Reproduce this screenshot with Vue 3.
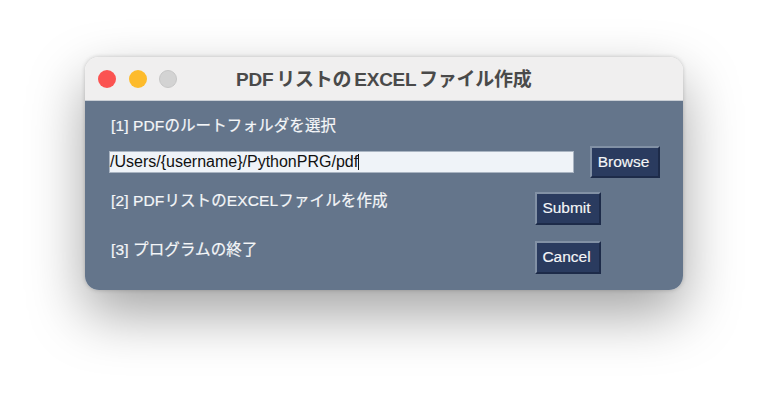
<template>
  <div class="page">
    <div class="window">
      <div class="titlebar">
        <div class="lights">
          <span class="light red"></span>
          <span class="light yellow"></span>
          <span class="light grey"></span>
        </div>
        <div class="title">PDF リストの EXCEL ファイル作成</div>
      </div>
      <div class="content">
        <div class="label first">[1] PDFのルートフォルダを選択</div>
        <div class="path-row">
          <div class="path-input">
            <span>{{ path }}</span><i class="caret"></i>
          </div>
          <button class="btn browse">Browse</button>
        </div>
        <div v-for="row in actions" :key="row.button" class="action-row">
          <div class="label">{{ row.text }}</div>
          <button class="btn action">{{ row.button }}</button>
        </div>
      </div>
    </div>
  </div>
</template>

<script setup>
const path = '/Users/{username}/PythonPRG/pdf';

const actions = [
  { text: '[2] PDFリストのEXCELファイルを作成', button: 'Submit' },
  { text: '[3] プログラムの終了', button: 'Cancel' }
];
</script>

<style>
html,
body {
  margin: 0;
  background: #fff;
}
</style>

<style scoped>
.page {
  width: 768px;
  height: 402px;
  box-sizing: border-box;
  padding: 57px 85px 0;
  overflow: hidden;
  background: #fff;
  font-family: "Liberation Sans", "Noto Sans CJK JP", sans-serif;
}

.window {
  width: 598px;
  height: 233px;
  border-radius: 14px;
  overflow: hidden;
  box-shadow: 0 24px 56px rgba(0, 0, 0, 0.36), 0 0 4px rgba(0, 0, 0, 0.2);
  display: flex;
  flex-direction: column;
}

.titlebar {
  height: 44px;
  flex: none;
  box-sizing: border-box;
  background: #f0efef;
  border-bottom: 1px solid #c9ced5;
  display: flex;
  align-items: center;
  padding-left: 13px;
}

.lights {
  display: flex;
  gap: 12.5px;
}

.light {
  width: 18px;
  height: 18px;
  border-radius: 50%;
  box-sizing: border-box;
}

.red {
  background: #fb5351;
}

.yellow {
  background: #fdbb2c;
}

.grey {
  background: #d3d3d3;
  border: 1px solid #c6c6c6;
}

.title {
  margin-left: 59px;
  margin-bottom: 2px;
  font-size: 19px;
  font-weight: 700;
  color: #4a4a4a;
  white-space: nowrap;
  letter-spacing: -0.25px;
  word-spacing: -2px;
}

.content {
  flex: 1;
  background: #64758b;
  padding: 15px 23px 0 24px;
  color: #f4f6f8;
}

.label {
  font-size: 15.5px;
  font-weight: 400;
  line-height: 20px;
  letter-spacing: 0.12px;
  padding-left: 2px;
  white-space: nowrap;
  -webkit-text-stroke: 0.2px #f4f6f8;
}

.first {
  height: 24px;
}

.path-row {
  display: flex;
  align-items: center;
  gap: 16px;
  height: 32px;
  margin-top: 6px;
}

.path-input {
  width: 465px;
  height: 22px;
  box-sizing: border-box;
  background: #eff3f8;
  border: 1px solid #a9b4c2;
  color: #111;
  font-size: 16px;
  line-height: 20px;
  white-space: nowrap;
  display: flex;
  align-items: center;
}

.caret {
  width: 1px;
  height: 16px;
  background: #111;
}

.btn {
  box-sizing: border-box;
  margin: 0;
  padding: 0 3px 1px 0;
  background: #2a3b5f;
  color: #f4f6f8;
  border: 2px solid;
  border-color: #8291a5 #1d2b49 #1d2b49 #8291a5;
  font-family: inherit;
  font-size: 15.5px;
  text-align: center;
  -webkit-text-stroke: 0.15px #f4f6f8;
}

.browse {
  width: 70px;
  height: 32px;
}

.action-row {
  display: flex;
  justify-content: space-between;
  width: 492px;
  height: 33px;
  margin-top: 14px;
}

.action-row + .action-row {
  margin-top: 16px;
}

.action-row .label {
  margin-top: -1px;
}

.action {
  width: 66px;
  height: 33px;
}
</style>
